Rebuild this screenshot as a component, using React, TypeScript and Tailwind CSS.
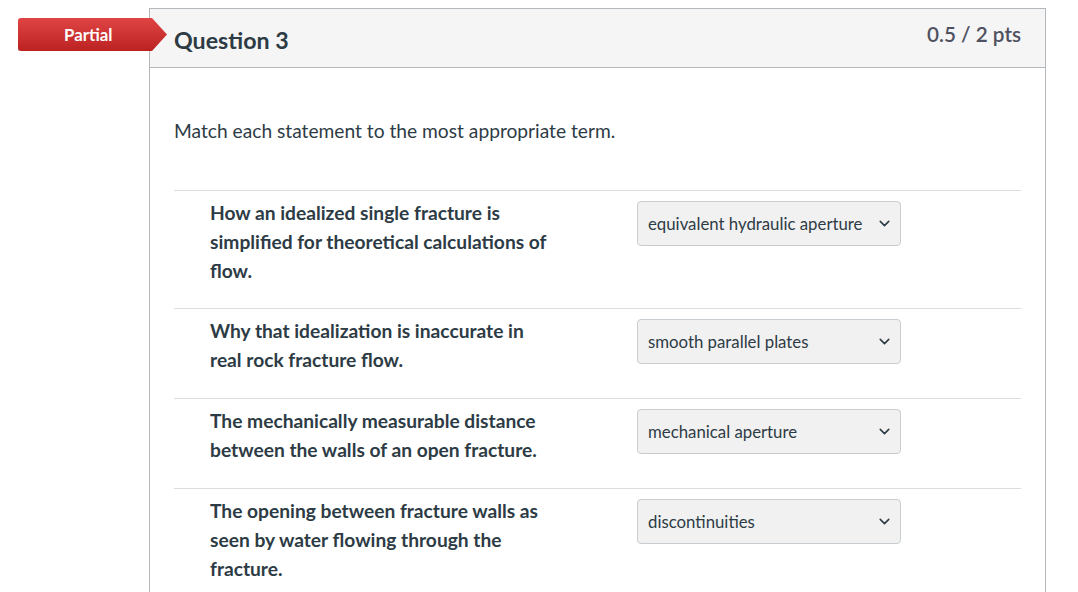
import { ChevronDown } from "lucide-react";

const ROWS = [
  {
    text: "How an idealized single fracture is simplified for theoretical calculations of flow.",
    answer: "equivalent hydraulic aperture",
  },
  {
    text: "Why that idealization is inaccurate in real rock fracture flow.",
    answer: "smooth parallel plates",
  },
  {
    text: "The mechanically measurable distance between the walls of an open fracture.",
    answer: "mechanical aperture",
  },
  {
    text: "The opening between fracture walls as seen by water flowing through the fracture.",
    answer: "discontinuities",
  },
];

function FakeSelect({ value }: { value: string }) {
  return (
    <div className="mt-[10px] flex h-[45px] w-[264px] items-center justify-between rounded-[4px] border border-[#c7cdd1] bg-[#f1f1f1] pl-[10px] pr-[7px] text-[16.8px] text-[#2d3b45]">
      <span>{value}</span>
      <ChevronDown size={17} strokeWidth={2.2} className="text-[#2d3b45]" />
    </div>
  );
}

export default function App() {
  return (
    <div className="min-h-screen bg-white pl-[149px] pt-2 font-['Lato','Liberation_Sans',sans-serif] text-[#2d3b45]">
      <div className="relative min-h-[600px] w-[897px] border border-b-0 border-[#b3b8bc]">
        <div className="absolute left-[-132px] top-[9px] z-10 flex h-[33px] w-[149px] items-center rounded-l-[3px] bg-gradient-to-b from-[#e04444] to-[#bb2121] pl-[46px] text-[16.8px] font-bold text-white shadow-[0_1px_2px_rgba(0,0,0,0.35)] [clip-path:polygon(0_0,calc(100%_-_15px)_0,100%_50%,calc(100%_-_15px)_100%,0_100%)]">
          Partial
        </div>

        <div className="flex h-[59px] items-start justify-between border-b border-[#b3b8bc] bg-[#f5f5f5] px-6">
          <h2 className="pt-[16px] text-[23.2px] font-bold leading-[30px]">Question 3</h2>
          <div className="pt-[11px] text-[20.7px] font-semibold leading-[28px] text-[#4f5160]">0.5 / 2 pts</div>
        </div>

        <div className="px-6 pt-[49px]">
          <p className="text-[19.2px] leading-[28px]">Match each statement to the most appropriate term.</p>

          <div className="mt-[45px]">
            {ROWS.map((row) => (
              <div key={row.answer} className="flex min-h-[90px] border-t border-[#dddddd]">
                <div className="w-[463px] pb-[23px] pl-9 pr-[85px] pt-[7px] text-[19.2px] font-bold leading-[29px]">
                  {row.text}
                </div>
                <FakeSelect value={row.answer} />
              </div>
            ))}
          </div>
        </div>
      </div>
    </div>
  );
}
